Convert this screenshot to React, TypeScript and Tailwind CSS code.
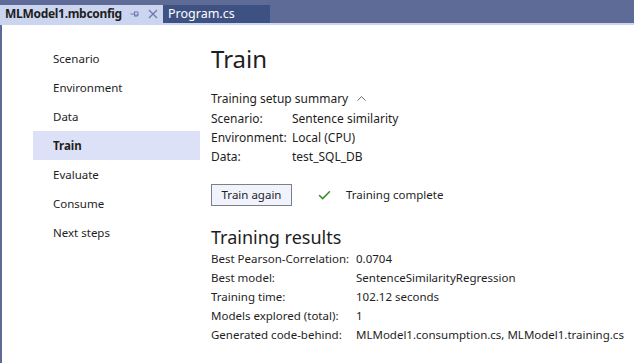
import { Check, ChevronUp } from 'lucide-react';

const navItems = ['Scenario', 'Environment', 'Data', 'Train', 'Evaluate', 'Consume', 'Next steps'];

const setup = [
  ['Scenario:', 'Sentence similarity'],
  ['Environment:', 'Local (CPU)'],
  ['Data:', 'test_SQL_DB'],
];

const results = [
  ['Best Pearson-Correlation:', '0.0704'],
  ['Best model:', 'SentenceSimilarityRegression'],
  ['Training time:', '102.12 seconds'],
  ['Models explored (total):', '1'],
  ['Generated code-behind:', 'MLModel1.consumption.cs, MLModel1.training.cs'],
];

function PinIcon() {
  return (
    <svg width="10" height="10" viewBox="0 0 10 10" className="shrink-0 text-[#6b7aa8]">
      <path d="M0.5 5h4M4.5 2.5v5M4.5 3h3.5v4H4.5M4.5 6h3.5" stroke="currentColor" fill="none" strokeWidth="1" />
    </svg>
  );
}

function CloseIcon() {
  return (
    <svg width="10" height="10" viewBox="0 0 10 10" className="shrink-0 text-[#6b7aa8]">
      <path d="M1 1l8 8M9 1l-8 8" stroke="currentColor" fill="none" strokeWidth="1.3" />
    </svg>
  );
}

export default function App() {
  return (
    <div className="flex h-[363px] w-[634px] flex-col overflow-hidden bg-white font-['Noto_Sans',sans-serif] text-[11.5px] text-[#1e1e1e]">
      <div className="flex h-[23px] shrink-0 items-end bg-[#5d6b96] pt-[5px]">
        <div className="flex h-full w-[163px] shrink-0 items-center gap-[8px] bg-[#ccd5f0] pl-[5px]">
          <span className="text-[12px] font-bold leading-none tracking-[-0.3px] text-[#1e1e1e]">MLModel1.mbconfig</span>
          <PinIcon />
          <CloseIcon />
        </div>
        <div className="flex h-full w-[107px] shrink-0 items-center bg-[#3e5183] pl-[5px] text-[12.5px] leading-none text-white">
          Program.cs
        </div>
      </div>
      <div className="h-[2px] shrink-0 bg-[#ccd5f0]" />
      <div className="flex flex-1 border-l-2 border-[#5d6b96]">
        <nav className="w-[198px] shrink-0 pt-[19px] pl-[31px]">
          {navItems.map(item => (
            <div
              key={item}
              className={
                item === 'Train'
                  ? 'flex h-[29px] items-center bg-[#dce1f7] pl-[20px] font-bold'
                  : 'flex h-[29px] items-center pl-[20px]'
              }
            >
              {item}
            </div>
          ))}
        </nav>
        <main className="flex-1 pl-[11px] pt-[18px]">
          <h1 className="text-[24px] leading-[32px] text-[#1e1e1e]">Train</h1>
          <div className="mt-[14px] flex items-center gap-[6px] text-[12px] leading-[19px]">
            Training setup summary
            <ChevronUp size={15} strokeWidth={1.1} />
          </div>
          <div className="mt-[1px] text-[12px]">
            {setup.map(([k, v]) => (
              <div key={k} className="flex h-[19px] items-center whitespace-nowrap">
                <span className="w-[81px] shrink-0">{k}</span>
                <span>{v}</span>
              </div>
            ))}
          </div>
          <div className="mt-[18px] flex items-center">
            <button className="h-[22px] w-[81px] border border-[#7a7f8a] bg-[#f0f3fc] leading-none">Train again</button>
            <Check size={15} strokeWidth={2.5} className="ml-[25px] text-[#3c8a2e]" />
            <span className="ml-[14px]">Training complete</span>
          </div>
          <h2 className="mt-[19px] text-[18px] leading-[24px]">Training results</h2>
          <div>
            {results.map(([k, v]) => (
              <div key={k} className="flex h-[19px] items-center whitespace-nowrap">
                <span className="w-[145px] shrink-0">{k}</span>
                <span>{v}</span>
              </div>
            ))}
          </div>
        </main>
      </div>
    </div>
  );
}
